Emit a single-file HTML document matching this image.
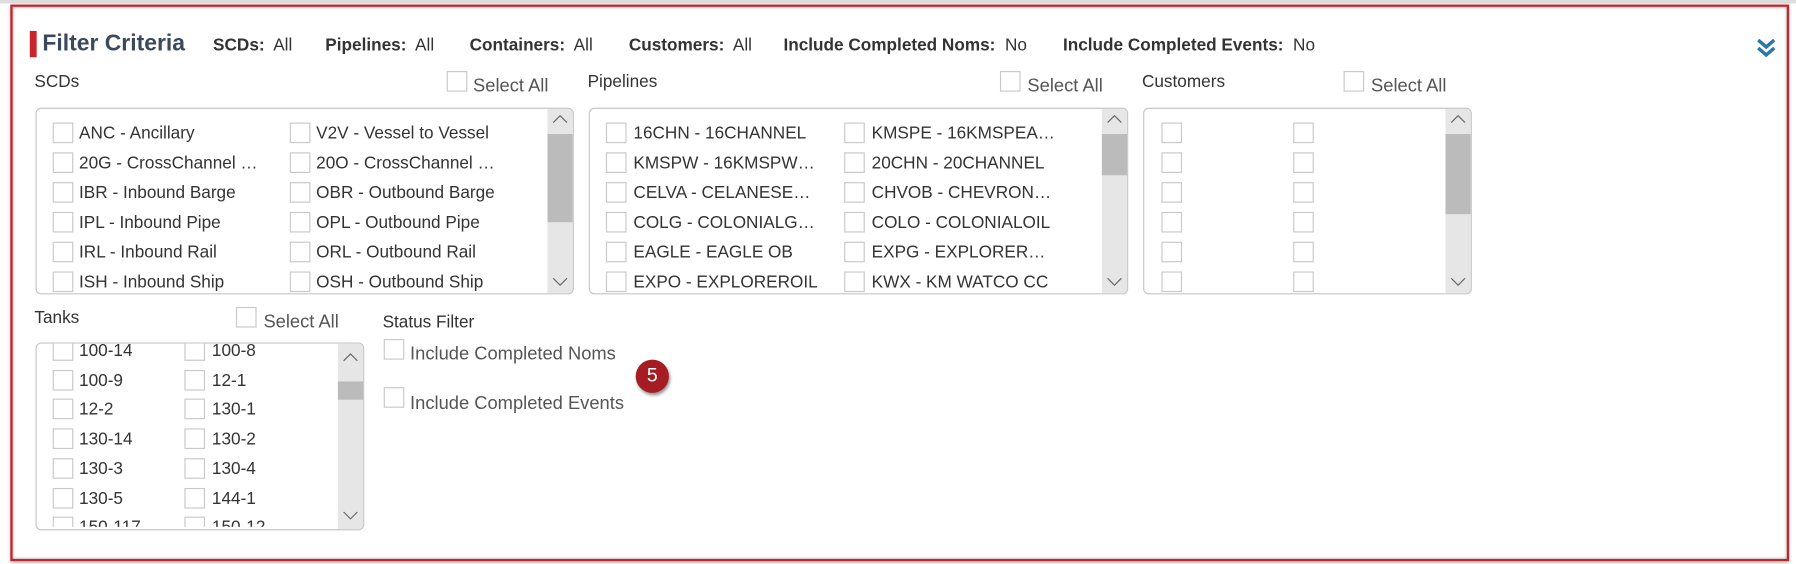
<!DOCTYPE html>
<html><head><meta charset="utf-8"><style>
html,body{margin:0;padding:0;background:#fff;width:1796px;height:564px;overflow:hidden}
#s{position:absolute;left:0;top:0;width:1568px;height:492px;transform:scale(1.14541);transform-origin:0 0;font-family:"Liberation Sans",Arial,sans-serif;color:#333}
.a{position:absolute;white-space:nowrap}
.cb{position:absolute;border:1px solid #c8c8c8;background:#fff;box-sizing:border-box;width:18px;height:18px}
.box{position:absolute;border:1px solid #c6c6c6;border-radius:5px;overflow:hidden;background:#fff}
.sb{position:absolute;top:0;bottom:0;right:0;width:22px;background:#e6e6e6}
.th{position:absolute;left:0;right:0;background:#bbb}
.ar{position:absolute;left:4px}
.t{font-size:15px;color:#333}
.lbl{font-size:15px;color:#333}
.sa{font-size:16px;color:#555}
.sum b{font-weight:bold;color:#333}
</style></head><body><div id="s">
<div class="a" style="left:0;top:0;width:1568px;height:3px;background:#ddd"></div>
<div class="a" style="left:9px;top:4px;width:1549px;height:482px;border:2px solid #c0272d;box-shadow:0 0 3px #999 inset, 0 1px 3px #aaa"></div>
<div class="a" style="left:26px;top:27px;width:6px;height:23px;background:#c8262c"></div>
<div class="a" style="left:37px;top:27px;font-size:20px;font-weight:bold;color:#3b4a5b">Filter Criteria</div>
<div class="a sum" style="left:186px;top:31px;font-size:15px"><b>SCDs:</b>&nbsp; All</div>
<div class="a sum" style="left:284px;top:31px;font-size:15px"><b>Pipelines:</b>&nbsp; All</div>
<div class="a sum" style="left:410px;top:31px;font-size:15px"><b>Containers:</b>&nbsp; All</div>
<div class="a sum" style="left:549px;top:31px;font-size:15px"><b>Customers:</b>&nbsp; All</div>
<div class="a sum" style="left:684px;top:31px;font-size:15px"><b>Include Completed Noms:</b>&nbsp; No</div>
<div class="a sum" style="left:928px;top:31px;font-size:15px"><b>Include Completed Events:</b>&nbsp; No</div>
<svg class="a" style="left:1532px;top:33px" width="20" height="18" viewBox="0 0 20 18"><path d="M3 2 L10 8 L17 2 M3 9 L10 15 L17 9" stroke="#2b78a6" stroke-width="3" fill="none"/></svg>

<div class="a lbl" style="left:30px;top:63px">SCDs</div>
<div class="cb" style="left:390px;top:62px"></div><div class="a sa" style="left:413px;top:67px">Select All</div>
<div class="box" style="left:31px;top:94px;width:468px;height:161px">
<div class="sb"><svg class="ar" style="top:5px" width="14" height="8"><path d="M1 7 L7 1 L13 7" stroke="#666" fill="none"/></svg><div class="th" style="top:22px;height:77px"></div><svg class="ar" style="bottom:6px" width="14" height="8"><path d="M1 1 L7 7 L13 1" stroke="#666" fill="none"/></svg></div>
</div>
<div class="a lbl" style="left:513px;top:63px">Pipelines</div>
<div class="cb" style="left:873px;top:62px"></div><div class="a sa" style="left:897px;top:67px">Select All</div>
<div class="box" style="left:514px;top:94px;width:469px;height:161px">
<div class="sb"><svg class="ar" style="top:5px" width="14" height="8"><path d="M1 7 L7 1 L13 7" stroke="#666" fill="none"/></svg><div class="th" style="top:22px;height:36px"></div><svg class="ar" style="bottom:6px" width="14" height="8"><path d="M1 1 L7 7 L13 1" stroke="#666" fill="none"/></svg></div>
</div>
<div class="a lbl" style="left:997px;top:63px">Customers</div>
<div class="cb" style="left:1173px;top:62px"></div><div class="a sa" style="left:1197px;top:67px">Select All</div>
<div class="box" style="left:998px;top:94px;width:285px;height:161px">
<div class="sb"><svg class="ar" style="top:5px" width="14" height="8"><path d="M1 7 L7 1 L13 7" stroke="#666" fill="none"/></svg><div class="th" style="top:22px;height:70px"></div><svg class="ar" style="bottom:6px" width="14" height="8"><path d="M1 1 L7 7 L13 1" stroke="#666" fill="none"/></svg></div>
</div>
<div class="a lbl" style="left:30px;top:269px">Tanks</div>
<div class="cb" style="left:206px;top:268px"></div><div class="a sa" style="left:230px;top:273px">Select All</div>
<div class="box" style="left:31px;top:299px;width:285px;height:162px">
<div class="sb"><svg class="ar" style="top:8px" width="14" height="8"><path d="M1 7 L7 1 L13 7" stroke="#666" fill="none"/></svg><div class="th" style="top:33px;height:16px"></div><svg class="ar" style="bottom:8px" width="14" height="8"><path d="M1 1 L7 7 L13 1" stroke="#666" fill="none"/></svg></div>
</div>
<div class="a lbl" style="left:334px;top:273px">Status Filter</div>
<div class="cb" style="left:335px;top:296px"></div><div class="a sa" style="left:358px;top:301px">Include Completed Noms</div>
<div class="cb" style="left:335px;top:338px"></div><div class="a sa" style="left:358px;top:344px">Include Completed Events</div>
<div class="a" style="left:555px;top:314px;width:29px;height:29px;border-radius:50%;background:#a51d22;color:#fff;font-size:17px;text-align:center;line-height:28px;box-shadow:1px 2px 3px rgba(0,0,0,.45)">5</div>

<div id="rows"></div>
<script>
function row(x,y,cx,tx,txt){var r=document.getElementById('rows');
var c=document.createElement('div');c.className='cb';c.style.left=cx+'px';c.style.top=(y-9)+'px';
var t=document.createElement('div');t.className='a t';t.style.left=tx+'px';t.style.top=(y-8)+'px';t.textContent=txt;
r.appendChild(c);r.appendChild(t);}
var ys=[116,142,168,194,220,246];
var s1=["ANC - Ancillary","20G - CrossChannel …","IBR - Inbound Barge","IPL - Inbound Pipe","IRL - Inbound Rail","ISH - Inbound Ship"];
var s2=["V2V - Vessel to Vessel","20O - CrossChannel …","OBR - Outbound Barge","OPL - Outbound Pipe","ORL - Outbound Rail","OSH - Outbound Ship"];
var p1=["16CHN - 16CHANNEL","KMSPW - 16KMSPW…","CELVA - CELANESE…","COLG - COLONIALG…","EAGLE - EAGLE OB","EXPO - EXPLOREROIL"];
var p2=["KMSPE - 16KMSPEA…","20CHN - 20CHANNEL","CHVOB - CHEVRON…","COLO - COLONIALOIL","EXPG - EXPLORER…","KWX - KM WATCO CC"];
for(var i=0;i<6;i++){row(0,ys[i],46,69,s1[i]);row(0,ys[i],253,276,s2[i]);row(0,ys[i],529,553,p1[i]);row(0,ys[i],737,761,p2[i]);row(0,ys[i],1014,0,"");row(0,ys[i],1129,0,"");}
</script>
<div class="a" style="left:32px;top:300px;width:262px;height:160px;overflow:hidden">
<div style="position:relative">
<script>
var ty=[6,32,57,83,109,135,160];var t1=["100-14","100-9","12-2","130-14","130-3","130-5","150-117"];var t2=["100-8","12-1","130-1","130-2","130-4","144-1","150-12"];
for(var i=0;i<7;i++){document.write('<div class="cb" style="left:14px;top:'+(ty[i]-9)+'px"></div><div class="a t" style="left:37px;top:'+(ty[i]-8)+'px">'+t1[i]+'</div><div class="cb" style="left:129px;top:'+(ty[i]-9)+'px"></div><div class="a t" style="left:153px;top:'+(ty[i]-8)+'px">'+t2[i]+'</div>');}
</script>
</div></div>
</div></body></html>
